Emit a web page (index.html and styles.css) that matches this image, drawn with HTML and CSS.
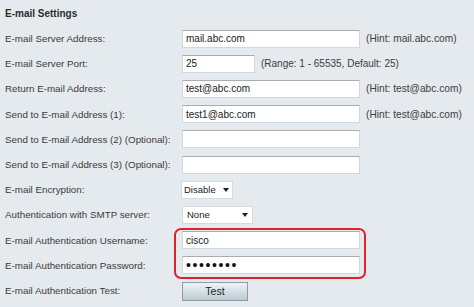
FILE: index.html
```html
<!DOCTYPE html>
<html lang="en">
<head>
  <meta charset="UTF-8">
  <meta name="viewport" content="width=device-width, initial-scale=1.0">
  <title>E-mail Settings</title>
  <link rel="stylesheet" href="styles.css">
</head>
<body>
  <div class="panel">
    <div class="title">E-mail Settings</div>

    <div class="row">
      <label for="server">E-mail Server Address:</label>
      <input type="text" id="server" class="field" value="mail.abc.com">
      <span class="hint">(Hint: mail.abc.com)</span>
    </div>

    <div class="row">
      <label for="port">E-mail Server Port:</label>
      <input type="text" id="port" class="field short" value="25">
      <span class="hint range">(Range: 1 - 65535, Default: 25)</span>
    </div>

    <div class="row">
      <label for="return">Return E-mail Address:</label>
      <input type="text" id="return" class="field" value="test@abc.com">
      <span class="hint">(Hint: test@abc.com)</span>
    </div>

    <div class="row">
      <label for="send1">Send to E-mail Address (1):</label>
      <input type="text" id="send1" class="field" value="test1@abc.com">
      <span class="hint">(Hint: test@abc.com)</span>
    </div>

    <div class="row">
      <label for="send2">Send to E-mail Address (2) (Optional):</label>
      <input type="text" id="send2" class="field" value="">
    </div>

    <div class="row">
      <label for="send3">Send to E-mail Address (3) (Optional):</label>
      <input type="text" id="send3" class="field" value="">
    </div>

    <div class="row">
      <label>E-mail Encryption:</label>
      <div class="select encrypt">
        <span>Disable</span>
        <svg width="6" height="4" viewBox="0 0 6 4"><path d="M0 0h6L3 4z" fill="#222"/></svg>
      </div>
    </div>

    <div class="row">
      <label>Authentication with SMTP server:</label>
      <div class="select smtp">
        <span>None</span>
        <svg width="6" height="4" viewBox="0 0 6 4"><path d="M0 0h6L3 4z" fill="#222"/></svg>
      </div>
    </div>

    <div class="marked">
      <div class="row">
        <label for="user">E-mail Authentication Username:</label>
        <input type="text" id="user" class="field" value="cisco">
      </div>
      <div class="row">
        <label for="pass">E-mail Authentication Password:</label>
        <input type="password" id="pass" class="field secret" value="cisco123">
      </div>
    </div>

    <div class="row">
      <label>E-mail Authentication Test:</label>
      <button type="button" class="test-btn">Test</button>
    </div>
  </div>
</body>
</html>
```

FILE: styles.css
```css
html, body {
  margin: 0;
  padding: 0;
  background: #e5eaee;
}
body {
  font-family: "Liberation Sans", Arial, sans-serif;
  font-size: 10px;
  color: #333;
}
.panel {
  padding: 2px 0 0 5px;
}
.title {
  height: 24px;
  line-height: 24px;
  font-weight: bold;
  font-size: 10px;
  color: #2b2b2b;
}
.row {
  display: flex;
  align-items: center;
  height: 25.2px;
}
.row label {
  width: 177px;
  flex-shrink: 0;
  font-size: 9.8px;
  color: #3a3a3a;
  white-space: nowrap;
}
.field {
  box-sizing: border-box;
  width: 178px;
  height: 18px;
  margin: 0;
  padding: 0 3px;
  border: 1px solid #d3d7da;
  border-top-color: #a9adb0;
  background: #fff;
  font-family: "Liberation Sans", Arial, sans-serif;
  font-size: 10px;
  color: #222;
  outline: none;
}
.field.short {
  width: 73px;
}
.field.secret {
  font-size: 14px;
  letter-spacing: 1.6px;
  color: #111;
}
.hint {
  margin-left: 6px;
  font-size: 10.2px;
  color: #3d3d3d;
  white-space: nowrap;
}
.hint.range {
  margin-left: 6px;
  font-size: 10px;
}
.select {
  box-sizing: border-box;
  display: flex;
  align-items: center;
  height: 18px;
  background: #fff;
  border: 1px solid #d6dadd;
  font-size: 9.5px;
  color: #222;
}
.select svg {
  margin-top: 1px;
}
.select.encrypt {
  margin-left: -1px;
  padding: 0 3px 0 2px;
}
.select.encrypt svg {
  margin-left: 7px;
}
.select.smtp {
  width: 71px;
  padding: 0 4px 0 4px;
  justify-content: space-between;
}
.marked {
  position: relative;
}
.marked::after {
  content: "";
  position: absolute;
  left: 169px;
  top: 0;
  width: 192px;
  height: 51px;
  box-sizing: border-box;
  border: 2px solid #e0202a;
  border-radius: 7px;
}
.test-btn {
  box-sizing: border-box;
  width: 66px;
  height: 19px;
  margin: 2px 0 0 0;
  padding: 0;
  border: 1px solid #8c9ca6;
  background: linear-gradient(#eef3f6, #bccbd4);
  font-family: "Liberation Sans", Arial, sans-serif;
  font-size: 10.5px;
  color: #222;
  cursor: pointer;
}
```
